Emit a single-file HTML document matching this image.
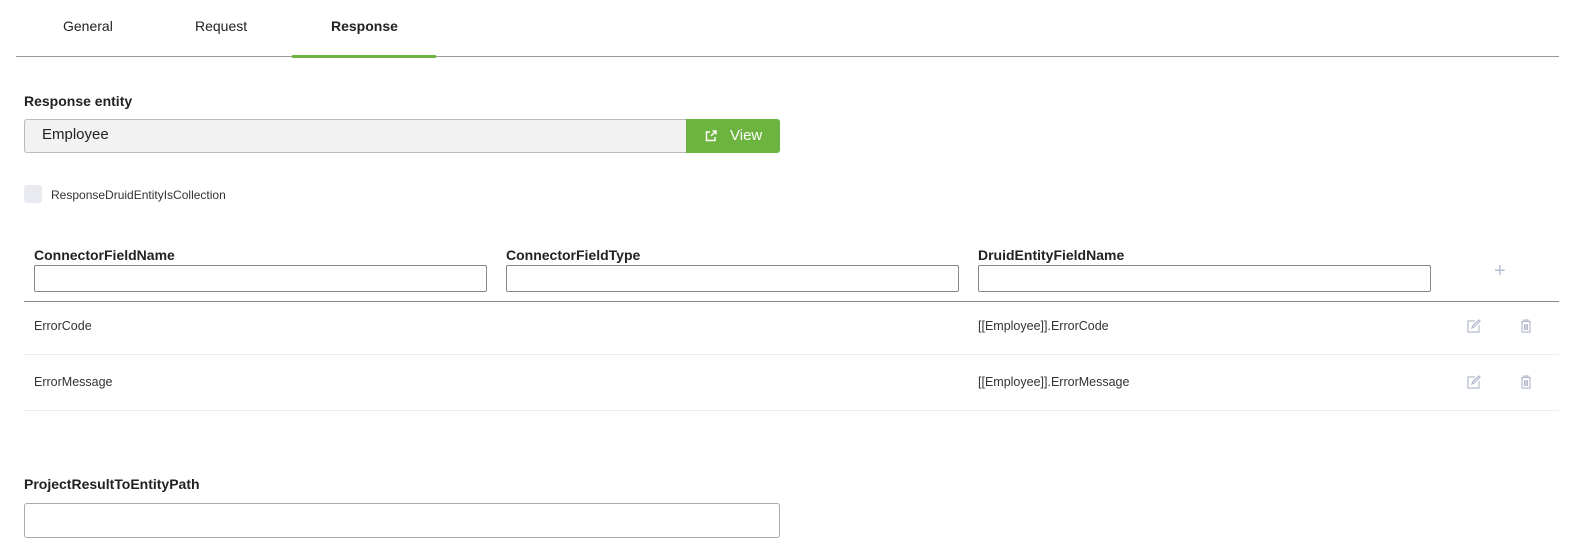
<!DOCTYPE html>
<html><head><style>
body{margin:0;width:1591px;height:560px;background:#fff;font-family:"Liberation Sans",sans-serif;color:#222;position:relative;overflow:hidden}
.a{position:absolute}
.tab{font-size:14px;top:18px}
.lbl{font-size:14px;font-weight:bold;color:#222}
.inp{position:absolute;border:1px solid #888;border-radius:2px;background:#fff;box-sizing:border-box}
.cell{font-size:12.5px;color:#333}
</style></head><body>
<div class="a tab" style="left:63px">General</div>
<div class="a tab" style="left:195px">Request</div>
<div class="a tab" style="left:331px;font-weight:bold">Response</div>
<div class="a" style="left:16px;top:56px;width:1543px;height:1px;background:#999"></div>
<div class="a" style="left:292px;top:55px;width:144px;height:3px;background:#6db33f"></div>

<div class="a lbl" style="left:24px;top:93px">Response entity</div>
<div class="a" style="left:24px;top:119px;width:662px;height:34px;background:#f2f2f2;border:1px solid #bbb;border-right:none;border-radius:3px 0 0 3px;box-sizing:border-box"></div>
<div class="a" style="left:42px;top:126px;font-size:15px">Employee</div>
<div class="a" style="left:686px;top:119px;width:94px;height:34px;background:#6db33f;border-radius:0 3px 3px 0;color:#fff;font-size:15px;line-height:34px">
<svg class="a" style="left:19px;top:11px" width="12" height="12" viewBox="0 0 12 12" fill="none" stroke="#fff" stroke-width="1.5"><path d="M5 2H1.5v8.5H10V7M6 6l5-5M7.5 1H11v3.5"/></svg>
<span style="position:absolute;left:44px">View</span></div>

<div class="a" style="left:24px;top:185px;width:18px;height:18px;background:#e8eaf0;border-radius:3px"></div>
<div class="a cell" style="left:51px;top:188px;font-size:12px">ResponseDruidEntityIsCollection</div>

<div class="a lbl" style="left:34px;top:247px">ConnectorFieldName</div>
<div class="a lbl" style="left:506px;top:247px">ConnectorFieldType</div>
<div class="a lbl" style="left:978px;top:247px">DruidEntityFieldName</div>
<div class="inp" style="left:34px;top:265px;width:453px;height:27px"></div>
<div class="inp" style="left:506px;top:265px;width:453px;height:27px"></div>
<div class="inp" style="left:978px;top:265px;width:453px;height:27px"></div>
<div class="a" style="left:1494px;top:260px;color:#b5bfd6;font-size:20px">+</div>
<div class="a" style="left:24px;top:301px;width:1535px;height:1px;background:#888"></div>

<div class="a cell" style="left:34px;top:319px">ErrorCode</div>
<div class="a cell" style="left:978px;top:319px">[[Employee]].ErrorCode</div>
<div class="a" style="left:24px;top:354px;width:1535px;height:1px;background:#eee"></div>
<div class="a cell" style="left:34px;top:375px">ErrorMessage</div>
<div class="a cell" style="left:978px;top:375px">[[Employee]].ErrorMessage</div>
<div class="a" style="left:24px;top:410px;width:1535px;height:1px;background:#eee"></div>

<svg class="a" style="left:1467px;top:319px" width="14" height="14" viewBox="0 0 14 14" fill="none" stroke="#b5bccf" stroke-width="1.2"><path d="M8 2H1v11h11V6"/><path d="M5 9l1-3 6-5 1 1-6 6z"/></svg>
<svg class="a" style="left:1520px;top:319px" width="12" height="14" viewBox="0 0 12 14" fill="none" stroke="#b5bccf" stroke-width="1.2"><path d="M1 2.5h10M4 2.5V1h4v1.5M2 3v10h8V3M4.5 5v6M6 5v6M7.5 5v6"/></svg>
<svg class="a" style="left:1467px;top:375px" width="14" height="14" viewBox="0 0 14 14" fill="none" stroke="#b5bccf" stroke-width="1.2"><path d="M8 2H1v11h11V6"/><path d="M5 9l1-3 6-5 1 1-6 6z"/></svg>
<svg class="a" style="left:1520px;top:375px" width="12" height="14" viewBox="0 0 12 14" fill="none" stroke="#b5bccf" stroke-width="1.2"><path d="M1 2.5h10M4 2.5V1h4v1.5M2 3v10h8V3M4.5 5v6M6 5v6M7.5 5v6"/></svg>

<div class="a lbl" style="left:24px;top:476px">ProjectResultToEntityPath</div>
<div class="inp" style="left:24px;top:503px;width:756px;height:35px;border-color:#aaa;border-radius:3px"></div>
</body></html>
